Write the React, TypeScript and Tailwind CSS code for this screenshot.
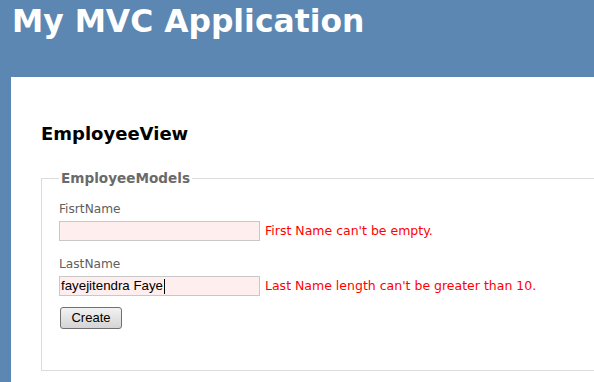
import React from "react";

const verdana = { fontFamily: '"DejaVu Sans", Verdana, sans-serif' };
const arial = { fontFamily: '"Liberation Sans", Arial, sans-serif' };

export default function App() {
  return (
    <div className="min-h-[382px] w-[594px] overflow-hidden bg-[#5c87b2]" style={verdana}>
      <div className="h-[77px] pl-[12px] pt-[2px]">
        <h1 className="text-[31.4px] font-bold leading-[38px] text-white whitespace-nowrap">
          My MVC Application
        </h1>
      </div>
      <div className="ml-[11px] min-h-[305px] w-[620px] bg-white pl-[30px] pt-[46px]">
        <h2 className="text-[18px] font-bold leading-[22px] text-black">EmployeeView</h2>
        <fieldset className="mt-[24px] border border-[#dcdcdc] pl-[17px] pr-4 pb-[41px] pt-0">
          <legend className="px-[2px] text-[13.6px] font-bold leading-[18px] text-[#6a6a6a]">
            EmployeeModels
          </legend>
          <div className="mt-[14px] text-[12.2px] leading-[16px] text-[#606060]">FisrtName</div>
          <div className="mt-[4px] flex items-center">
            <input
              className="h-[20px] w-[201px] border border-[#c8c8c8] bg-[#ffeeee] px-[2px] text-[13px] text-black outline-none"
              style={arial}
              defaultValue=""
            />
            <span className="ml-[5px] text-[12.5px] text-[#ff0000]">First Name can't be empty.</span>
          </div>
          <div className="mt-[15px] text-[12.2px] leading-[16px] text-[#606060]">LastName</div>
          <div className="mt-[4px] flex items-center">
            <div
              className="flex h-[20px] w-[201px] items-center border border-[#c8c8c8] bg-[#ffeeee] pl-[1px] text-[13.3px] text-black"
              style={arial}
            >
              fayejitendra Faye
              <span className="ml-[1px] h-[15px] w-[1px] bg-black" />
            </div>
            <span className="ml-[5px] text-[12.5px] text-[#ff0000]">
              Last Name length can't be greater than 10.
            </span>
          </div>
          <button
            className="mt-[11px] ml-[1px] h-[22px] w-[62px] rounded-[3px] border border-[#707070] bg-gradient-to-b from-[#f2f2f2] to-[#d4d4d4] text-[13px] text-black"
            style={arial}
          >
            Create
          </button>
        </fieldset>
      </div>
    </div>
  );
}
